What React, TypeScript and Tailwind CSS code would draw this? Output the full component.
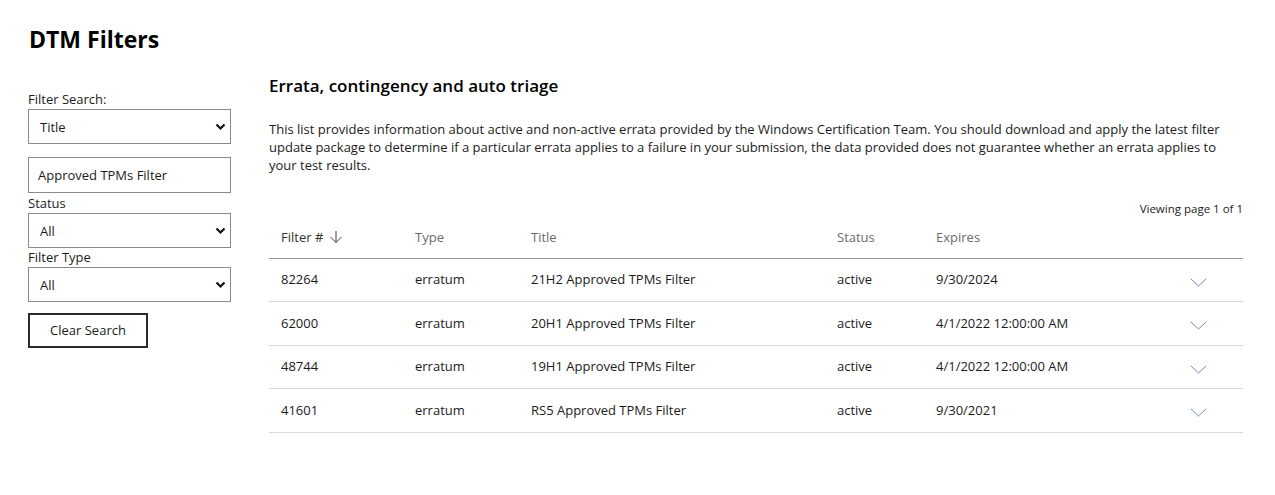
import React from 'react';

const rows = [
  { id: '82264', type: 'erratum', title: '21H2 Approved TPMs Filter', status: 'active', expires: '9/30/2024' },
  { id: '62000', type: 'erratum', title: '20H1 Approved TPMs Filter', status: 'active', expires: '4/1/2022 12:00:00 AM' },
  { id: '48744', type: 'erratum', title: '19H1 Approved TPMs Filter', status: 'active', expires: '4/1/2022 12:00:00 AM' },
  { id: '41601', type: 'erratum', title: 'RS5 Approved TPMs Filter', status: 'active', expires: '9/30/2021' },
];

function Select({ value }: { value: string }) {
  return (
    <div className="relative h-[35px] w-[203px] border border-[#8a8a8a] bg-white">
      <span className="absolute left-[11px] top-[7px] text-[13px] leading-[20px] text-[#1b1b1b]">{value}</span>
      <svg className="absolute right-[4px] top-[13px]" width="11" height="8" viewBox="0 0 11 8">
        <path d="M1.5 1.5 L5.5 5.5 L9.5 1.5" fill="none" stroke="#111" strokeWidth="2.2" />
      </svg>
    </div>
  );
}

function Chevron() {
  return (
    <svg width="17" height="9" viewBox="0 0 17 9">
      <path d="M0.8 0.8 L8.5 8 L16.2 0.8" fill="none" stroke="#6e8bab" strokeWidth="1" />
    </svg>
  );
}

export default function App() {
  return (
    <div className="min-h-[495px] bg-white text-[#1b1b1b]" style={{ fontFamily: '"Segoe UI", "Open Sans", sans-serif' }}>
      <div className="pl-[28px] pr-[32px] pt-[24px]">
        <h1 className="pl-[1px] text-[23px] font-bold leading-[30px] text-black">DTM Filters</h1>
        <div className="flex gap-[38px] pt-[13px]">
          {/* sidebar */}
          <div className="w-[203px] shrink-0 pt-[22px] text-[13px]">
            <label className="block leading-[20px]">Filter Search:</label>
            <Select value="Title" />
            <div className="mt-[13px] h-[36px] border border-[#8a8a8a] px-[9px] pt-[7px] leading-[20px]">Approved TPMs Filter</div>
            <label className="block leading-[20px]">Status</label>
            <Select value="All" />
            <label className="mt-[-1px] block leading-[20px]">Filter Type</label>
            <Select value="All" />
            <button className="mt-[11px] h-[35px] w-[120px] border-2 border-[#2b2b2b] text-[13px]">Clear Search</button>
          </div>

          {/* main */}
          <div className="flex-1">
            <h2 className="mt-[7px] text-[17px] font-semibold leading-[24px] text-black">Errata, contingency and auto triage</h2>
            <p className="mt-[22px] text-[13px] leading-[18px]">
              This list provides information about active and non-active errata provided by the Windows Certification Team. You should download and apply the latest filter update package to determine if a particular errata applies to a failure in your submission, the data provided does not guarantee whether an errata applies to your test results.
            </p>
            <div className="mt-[27px] text-right text-[11.5px] leading-[16px]">Viewing page 1 of 1</div>
            <table className="w-full table-fixed text-[13px]">
              <colgroup>
                <col className="w-[134px]" />
                <col className="w-[116px]" />
                <col className="w-[306px]" />
                <col className="w-[99px]" />
                <col className="w-[250px]" />
                <col />
              </colgroup>
              <thead>
                <tr className="h-[41px] border-b border-[#9a9a9a] text-left">
                  <th className="px-[12px] font-normal text-[#333]">
                    <span className="inline-flex items-center gap-[6px]">
                      Filter #
                      <svg width="14" height="14" viewBox="0 0 14 14">
                        <path d="M7 1 V12.5 M1.5 7 L7 12.5 L12.5 7" fill="none" stroke="#444" strokeWidth="1" />
                      </svg>
                    </span>
                  </th>
                  <th className="px-[12px] font-normal text-[#6b6b6b]">Type</th>
                  <th className="px-[12px] font-normal text-[#6b6b6b]">Title</th>
                  <th className="px-[12px] font-normal text-[#6b6b6b]">Status</th>
                  <th className="px-[12px] font-normal text-[#6b6b6b]">Expires</th>
                  <th />
                </tr>
              </thead>
              <tbody>
                {rows.map((r) => (
                  <tr key={r.id} className="h-[43.5px] border-b border-[#d9d9d9]">
                    <td className="px-[12px]">{r.id}</td>
                    <td className="px-[12px]">{r.type}</td>
                    <td className="px-[12px]">{r.title}</td>
                    <td className="px-[12px]">{r.status}</td>
                    <td className="px-[12px]">{r.expires}</td>
                    <td className="pl-[16px] pt-[5px]"><Chevron /></td>
                  </tr>
                ))}
              </tbody>
            </table>
          </div>
        </div>
      </div>
    </div>
  );
}
